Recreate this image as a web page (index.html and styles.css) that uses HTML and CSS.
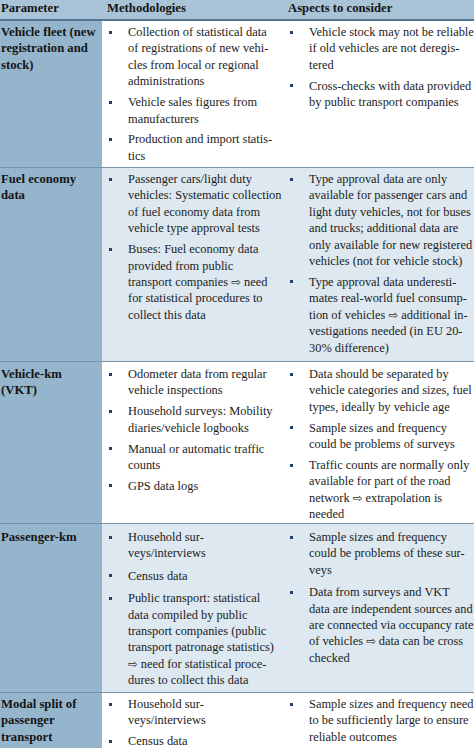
FILE: index.html
```html
<!DOCTYPE html>
<html lang="en">
<head>
<meta charset="utf-8">
<title>Transport data parameters</title>
<link rel="stylesheet" href="styles.css">
</head>
<body>
<div class="table">
  <div class="row head">
    <div class="cell label">Parameter</div>
    <div class="cell">Methodologies</div>
    <div class="cell col3">Aspects to consider</div>
  </div>

  <div class="row r1">
    <div class="cell label">Vehicle fleet (new<br>registration and<br>stock)</div>
    <ul class="cell list">
      <li><span>Collection of statistical data<br>of registrations of new vehi-<br>cles from local or regional<br>administrations</span></li>
      <li><span>Vehicle sales figures from<br>manufacturers</span></li>
      <li><span>Production and import statis-<br>tics</span></li>
    </ul>
    <ul class="cell list col3">
      <li><span>Vehicle stock may not be reliable<br>if old vehicles are not deregis-<br>tered</span></li>
      <li><span>Cross-checks with data provided<br>by public transport companies</span></li>
    </ul>
  </div>

  <div class="row r2 tint">
    <div class="cell label">Fuel economy<br>data</div>
    <ul class="cell list">
      <li><span>Passenger cars/light duty<br>vehicles: Systematic collection<br>of fuel economy data from<br>vehicle type approval tests</span></li>
      <li><span>Buses: Fuel economy data<br>provided from public<br>transport companies <span class="arr">&#x21E8;</span> need<br>for statistical procedures to<br>collect this data</span></li>
    </ul>
    <ul class="cell list col3">
      <li><span>Type approval data are only<br>available for passenger cars and<br>light duty vehicles, not for buses<br>and trucks; additional data are<br>only available for new registered<br>vehicles (not for vehicle stock)</span></li>
      <li><span>Type approval data underesti-<br>mates real-world fuel consump-<br>tion of vehicles <span class="arr">&#x21E8;</span> additional in-<br>vestigations needed (in EU 20-<br>30% difference)</span></li>
    </ul>
  </div>

  <div class="row r3">
    <div class="cell label">Vehicle-km<br>(VKT)</div>
    <ul class="cell list">
      <li><span>Odometer data from regular<br>vehicle inspections</span></li>
      <li><span>Household surveys: Mobility<br>diaries/vehicle logbooks</span></li>
      <li><span>Manual or automatic traffic<br>counts</span></li>
      <li><span>GPS data logs</span></li>
    </ul>
    <ul class="cell list col3">
      <li><span>Data should be separated by<br>vehicle categories and sizes, fuel<br>types, ideally by vehicle age</span></li>
      <li><span>Sample sizes and frequency<br>could be problems of surveys</span></li>
      <li><span>Traffic counts are normally only<br>available for part of the road<br>network <span class="arr">&#x21E8;</span> extrapolation is<br>needed</span></li>
    </ul>
  </div>

  <div class="row r4 tint">
    <div class="cell label">Passenger-km</div>
    <ul class="cell list">
      <li><span>Household sur-<br>veys/interviews</span></li>
      <li><span>Census data</span></li>
      <li><span>Public transport: statistical<br>data compiled by public<br>transport companies (public<br>transport patronage statistics)<br><span class="arr">&#x21E8;</span> need for statistical proce-<br>dures to collect this data</span></li>
    </ul>
    <ul class="cell list col3">
      <li><span>Sample sizes and frequency<br>could be problems of these sur-<br>veys</span></li>
      <li><span>Data from surveys and VKT<br>data are independent sources and<br>are connected via occupancy rates<br>of vehicles <span class="arr">&#x21E8;</span> data can be cross<br>checked</span></li>
    </ul>
  </div>

  <div class="row r5">
    <div class="cell label">Modal split of<br>passenger<br>transport</div>
    <ul class="cell list">
      <li><span>Household sur-<br>veys/interviews</span></li>
      <li><span>Census data</span></li>
    </ul>
    <ul class="cell list col3">
      <li><span>Sample sizes and frequency need<br>to be sufficiently large to ensure<br>reliable outcomes</span></li>
    </ul>
  </div>
</div>
</body>
</html>
```

FILE: styles.css
```css
html, body {
  margin: 0;
  padding: 0;
}

body {
  width: 474px;
  height: 748px;
  overflow: hidden;
  background: #ffffff;
  font-family: "Liberation Serif", "Times New Roman", serif;
  color: #1c1c1c;
}

.table {
  display: flex;
  flex-direction: column;
  width: 490px;
}

.row {
  display: grid;
  grid-template-columns: 102px 181px 207px;
  box-sizing: border-box;
  border-bottom: 1px solid #7592ab;
  background: #ffffff;
}

.row.tint {
  background: #dde8f0;
}

.cell {
  margin: 0;
  padding: 3px 0 0 5px;
  white-space: nowrap;
  font-size: 12.4px;
  line-height: 16.4px;
}

.col3 {
  padding-left: 5px;
}

.label {
  background: #95b5cc;
  padding-left: 1px;
  font-weight: bold;
  font-size: 12.7px;
  color: #141414;
}

/* header */
.head {
  height: 21px;
  background: #a9c4d7;
  border-bottom: 2px solid #557591;
}

.head .cell {
  padding-top: 0;
  font-weight: bold;
  font-size: 12.7px;
  line-height: 16px;
  color: #141414;
}

.head .label {
  background: transparent;
}

/* row heights */
.r1 { height: 147px; }
.r2 { height: 194px; }
.r3 { height: 162px; }
.r4 { height: 169px; }
.r5 { height: 60px; }

.r3 .cell { padding-top: 4px; }
.r4 .cell { padding-top: 5px; }

/* bullet lists */
.list {
  list-style: none;
  padding-left: 7px;
}

.list li {
  display: grid;
  grid-template-columns: 19px auto;
  align-items: start;
}

.list li + li {
  margin-top: 4.5px;
}

.r4 .list li + li {
  margin-top: 6px;
}

.list li::before {
  content: "";
  width: 3px;
  height: 3px;
  margin-top: 6.5px;
  background: #22406c;
}

.arr {
  font-family: "DejaVu Sans", sans-serif;
  font-size: 11.5px;
  line-height: 1;
  color: #2a2a2a;
}
```
